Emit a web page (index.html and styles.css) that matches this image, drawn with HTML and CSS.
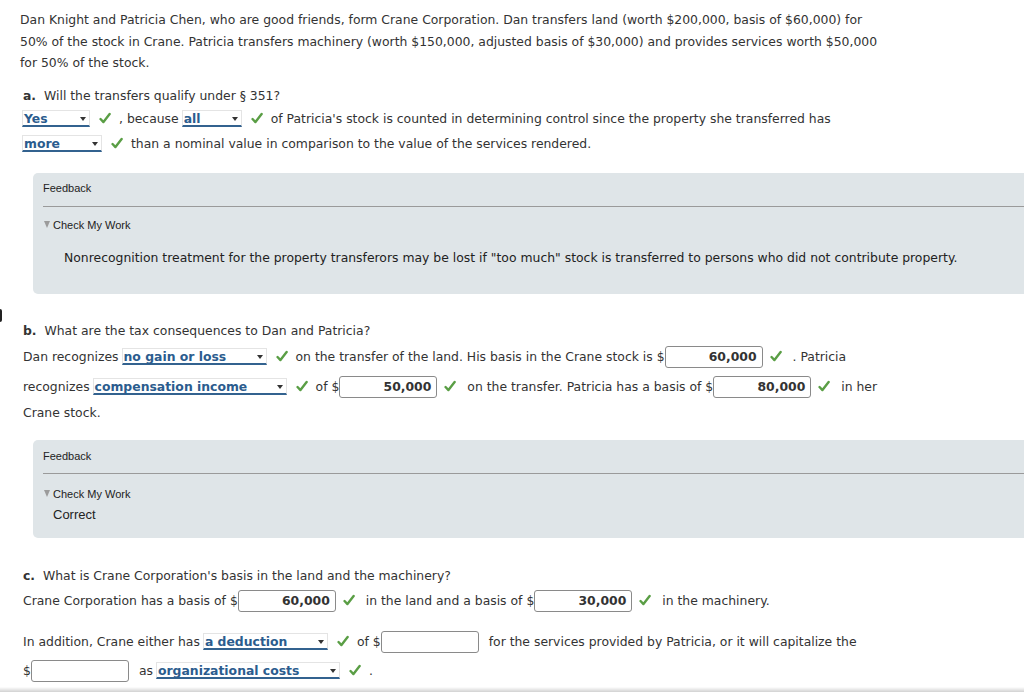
FILE: index.html
```html
<!DOCTYPE html>
<html lang="en">
<head>
  <meta charset="UTF-8" />
  <title>Crane Corporation - Section 351</title>
  <link rel="stylesheet" href="styles.css">
</head>
<body>
  <div class="page">

    <p class="intro">
      Dan Knight and Patricia Chen, who are good friends, form Crane Corporation. Dan transfers land (worth $200,000, basis of $60,000) for<br>
      50% of the stock in Crane. Patricia transfers machinery (worth $150,000, adjusted basis of $30,000) and provides services worth $50,000<br>
      for 50% of the stock.
    </p>

    <!-- part a -->
    <div class="question"><b>a.</b> Will the transfers qualify under § 351?</div>
    <div class="row row-a">
      <span class="dropdown first" style="width:68px">Yes</span>
      <span class="check"><svg viewBox="0 0 14 14"><path d="M1.8 7.6 L5.2 11.2 L12.4 1.8"/></svg></span>
      <span class="txt">, because</span>
      <span class="dropdown" style="width:60px">all</span>
      <span class="check"><svg viewBox="0 0 14 14"><path d="M1.8 7.6 L5.2 11.2 L12.4 1.8"/></svg></span>
      <span class="txt">of Patricia's stock is counted in determining control since the property she transferred has</span>
    </div>
    <div class="row row-a">
      <span class="dropdown first" style="width:80px">more</span>
      <span class="check"><svg viewBox="0 0 14 14"><path d="M1.8 7.6 L5.2 11.2 L12.4 1.8"/></svg></span>
      <span class="txt">than a nominal value in comparison to the value of the services rendered.</span>
    </div>

    <div class="feedback fb-one">
      <div class="fb-title">Feedback</div>
      <div class="fb-toggle"><span class="tri"></span>Check My Work</div>
      <div class="fb-note">Nonrecognition treatment for the property transferors may be lost if "too much" stock is transferred to persons who did not contribute property.</div>
    </div>

    <!-- part b -->
    <div class="question q-b"><b>b.</b> What are the tax consequences to Dan and Patricia?</div>
    <div class="row row-b">
      <span class="txt">Dan recognizes</span>
      <span class="dropdown" style="width:145px">no gain or loss</span>
      <span class="check"><svg viewBox="0 0 14 14"><path d="M1.8 7.6 L5.2 11.2 L12.4 1.8"/></svg></span>
      <span class="txt">on the transfer of the land. His basis in the Crane stock is $</span><span class="amount">60,000</span>
      <span class="check"><svg viewBox="0 0 14 14"><path d="M1.8 7.6 L5.2 11.2 L12.4 1.8"/></svg></span>
      <span class="txt">. Patricia</span>
    </div>
    <div class="row row-b">
      <span class="txt">recognizes</span>
      <span class="dropdown" style="width:194px">compensation income</span>
      <span class="check"><svg viewBox="0 0 14 14"><path d="M1.8 7.6 L5.2 11.2 L12.4 1.8"/></svg></span>
      <span class="txt">of $</span><span class="amount">50,000</span>
      <span class="check"><svg viewBox="0 0 14 14"><path d="M1.8 7.6 L5.2 11.2 L12.4 1.8"/></svg></span>
      <span class="txt">on the transfer. Patricia has a basis of $</span><span class="amount">80,000</span>
      <span class="check"><svg viewBox="0 0 14 14"><path d="M1.8 7.6 L5.2 11.2 L12.4 1.8"/></svg></span>
      <span class="txt">in her</span>
    </div>
    <div class="row row-plain">
      <span class="txt">Crane stock.</span>
    </div>

    <div class="feedback fb-two">
      <div class="fb-title">Feedback</div>
      <div class="fb-toggle"><span class="tri"></span>Check My Work</div>
      <div class="fb-result">Correct</div>
    </div>

    <!-- part c -->
    <div class="question q-c"><b>c.</b> What is Crane Corporation's basis in the land and the machinery?</div>
    <div class="row row-c1">
      <span class="txt">Crane Corporation has a basis of $</span><span class="amount">60,000</span>
      <span class="check"><svg viewBox="0 0 14 14"><path d="M1.8 7.6 L5.2 11.2 L12.4 1.8"/></svg></span>
      <span class="txt">in the land and a basis of $</span><span class="amount">30,000</span>
      <span class="check"><svg viewBox="0 0 14 14"><path d="M1.8 7.6 L5.2 11.2 L12.4 1.8"/></svg></span>
      <span class="txt">in the machinery.</span>
    </div>
    <div class="row row-c2">
      <span class="txt">In addition, Crane either has</span>
      <span class="dropdown" style="width:125px">a deduction</span>
      <span class="check"><svg viewBox="0 0 14 14"><path d="M1.8 7.6 L5.2 11.2 L12.4 1.8"/></svg></span>
      <span class="txt">of $</span><span class="amount empty"></span>
      <span class="txt gap">for the services provided by Patricia, or it will capitalize the</span>
    </div>
    <div class="row row-c3">
      <span class="txt">$</span><span class="amount empty"></span>
      <span class="txt gap">as</span>
      <span class="dropdown" style="width:184px">organizational costs</span>
      <span class="check"><svg viewBox="0 0 14 14"><path d="M1.8 7.6 L5.2 11.2 L12.4 1.8"/></svg></span>
      <span class="txt">.</span>
    </div>

  </div>
  <div class="edge-mark"></div>
  <div class="bottom-shade"></div>
</body>
</html>
```

FILE: styles.css
```css
* {
  box-sizing: border-box;
}

body {
  margin: 0;
  background: #fff;
  color: #333;
  font-family: "DejaVu Sans", Verdana, sans-serif;
  font-size: 12.4px;
  overflow: hidden;
}

.page {
  padding-left: 20px;
}

.intro {
  margin: 9px 0 0;
  line-height: 21.5px;
}

.question {
  margin-top: 12px;
  padding-left: 3px;
  line-height: 20px;
  height: 20px;
}

.question b {
  margin-right: 4px;
}

.q-b {
  margin-top: 27px;
}

.q-c {
  margin-top: 28px;
}

.row {
  display: flex;
  align-items: center;
  padding-left: 3px;
  white-space: nowrap;
}

.row-a {
  height: 25px;
  padding-left: 2px;
}

.row-b {
  height: 26px;
  margin-top: 3px;
}

.row-b + .row-b {
  margin-top: 4px;
}

.row-plain {
  height: 20px;
  margin-top: 3px;
}

.row-c1 {
  height: 26px;
  margin-top: 2px;
}

.row-c2 {
  height: 26px;
  margin-top: 15px;
}

.row-c3 {
  height: 26px;
  margin-top: 3px;
}

.txt {
  display: inline-block;
}

.txt.gap {
  margin-left: 10px;
}

/* fake select boxes */
.dropdown {
  position: relative;
  display: inline-block;
  height: 17px;
  line-height: 15px;
  margin-left: 3px;
  padding-left: 1px;
  font-weight: bold;
  color: #2b5c8e;
  background: #fff;
  border: 1px solid #e4e4e4;
  border-bottom: 2px solid #33628f;
}

.dropdown.first {
  margin-left: 0;
}

.dropdown::after {
  content: "";
  position: absolute;
  right: 3px;
  top: 6px;
  border-left: 3.5px solid transparent;
  border-right: 3.5px solid transparent;
  border-top: 4px solid #333;
}

.check {
  display: inline-block;
  width: 12px;
  height: 13px;
  margin: 0 8px 0 9px;
}

.amount + .check {
  margin-left: 7px;
  margin-right: 11px;
}

.check svg {
  width: 12px;
  height: 13px;
  display: block;
}

.check path {
  fill: none;
  stroke: #5a9e45;
  stroke-width: 2.8;
  stroke-linecap: round;
  stroke-linejoin: round;
}

.amount {
  display: inline-block;
  width: 98px;
  height: 22px;
  line-height: 20px;
  padding-right: 5px;
  text-align: right;
  font-weight: bold;
  color: #333;
  border: 1px solid #8a8a8a;
  border-radius: 3px;
  background: #fff;
}

/* feedback panels */
.feedback {
  margin-left: 13px;
  margin-right: -40px;
  background: #dfe5e8;
  border-radius: 5px;
  padding-left: 10px;
  font-family: "Liberation Sans", Arial, sans-serif;
  color: #222;
}

.fb-one {
  margin-top: 17px;
  height: 121px;
}

.fb-two {
  margin-top: 17px;
  height: 98px;
}

.fb-title {
  font-size: 11px;
  line-height: 14px;
  padding-top: 8px;
  padding-bottom: 11px;
  border-bottom: 1px solid #9a9a9a;
}

.fb-two .fb-title {
  padding-top: 9px;
  padding-bottom: 10px;
}

.fb-toggle {
  font-size: 11px;
  line-height: 14px;
  margin-top: 11px;
  padding-left: 1px;
}

.fb-two .fb-toggle {
  margin-top: 13px;
}

.tri {
  display: inline-block;
  width: 0;
  height: 0;
  margin-right: 3px;
  vertical-align: 1px;
  border-left: 3px solid transparent;
  border-right: 3px solid transparent;
  border-top: 7px solid #9b9b9b;
}

.fb-note {
  margin-top: 16px;
  padding-left: 21px;
  font-family: "DejaVu Sans", Verdana, sans-serif;
  font-size: 12.4px;
  line-height: 20px;
  color: #222;
}

.fb-result {
  margin-top: 6px;
  padding-left: 10px;
  font-size: 13px;
  line-height: 16px;
}

.edge-mark {
  position: absolute;
  left: 0;
  top: 309px;
  width: 2px;
  height: 13px;
  background: #222;
  border-radius: 0 2px 2px 0;
}

.bottom-shade {
  position: fixed;
  left: 0;
  right: 0;
  bottom: 0;
  height: 5px;
  background: linear-gradient(to bottom, rgba(0,0,0,0), rgba(0,0,0,0.18));
}
```
